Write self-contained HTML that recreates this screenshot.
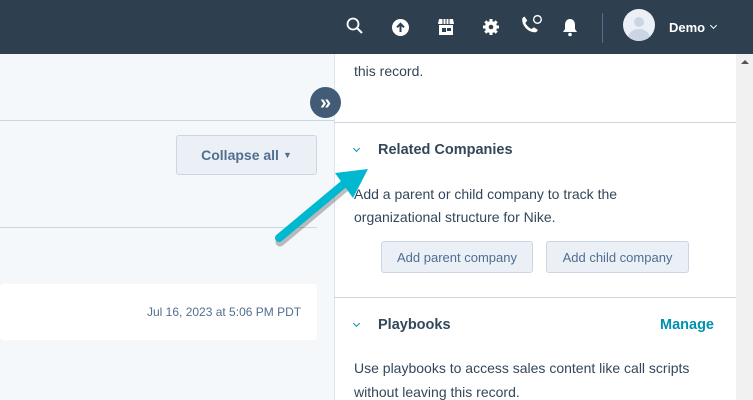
<!DOCTYPE html>
<html><head><meta charset="utf-8">
<style>
*{margin:0;padding:0;box-sizing:border-box}
body{width:753px;height:400px;overflow:hidden;position:relative;font-family:"Liberation Sans",sans-serif;background:#f5f8fa;color:#33475b}
.nav{position:absolute;left:0;top:0;width:753px;height:54px;background:#2e3f50}
.ic{position:absolute;top:15px}
.left{position:absolute;left:0;top:54px;width:334px;height:346px;background:#f5f8fa}
.hl{position:absolute;height:1px;background:#cbd6e2}
.btn{position:absolute;background:#eaf0f6;border:1px solid #cbd6e2;border-radius:3px;color:#506e91;font-size:13px;display:flex;align-items:center;justify-content:center}
.panel{position:absolute;left:334px;top:54px;width:402px;height:346px;background:#fff;border-left:1px solid #dfe3eb}
.sb{position:absolute;left:736px;top:54px;width:17px;height:346px;background:#f1f1f1}
.t{position:absolute;font-size:14px;color:#33475b;white-space:nowrap}
.h{position:absolute;font-size:14.5px;font-weight:bold;color:#33475b}
.chev{position:absolute;width:5px;height:5px;border-right:1.6px solid #0091ae;border-bottom:1.6px solid #0091ae;transform:rotate(45deg)}
</style></head><body>
<div class="nav">
 <svg class="ic" style="left:346px;top:17px" width="18" height="18" viewBox="0 0 18 18"><circle cx="7" cy="7" r="5.5" fill="none" stroke="#fff" stroke-width="1.8"/><path d="M11 11l5 5" stroke="#fff" stroke-width="2"/></svg>
 <svg class="ic" style="left:392px;top:19px" width="17" height="17" viewBox="0 0 17 17"><circle cx="8.5" cy="8.5" r="8.5" fill="#fff"/><path d="M8.5 13V5M5 8.3l3.5-3.5 3.5 3.5" stroke="#2e3f50" stroke-width="2" fill="none"/></svg>
 <svg class="ic" style="left:437px;top:18px" width="18" height="18" viewBox="0 0 18 18"><path d="M2 1h14l1 5H1z" fill="#fff"/><path d="M2 7h14v10H2z" fill="#fff"/><rect x="5" y="10" width="4" height="4" fill="#2e3f50"/><rect x="10" y="10" width="4" height="3" fill="#2e3f50"/><path d="M6 1v5M9 1v5M12 1v5" stroke="#2e3f50" stroke-width="1"/></svg>
 <svg class="ic" style="left:482px;top:18px" width="18" height="18" viewBox="0 0 18 18"><circle cx="9" cy="9" r="6" fill="#fff"/><path d="M9 1v16M1 9h16M3.3 3.3l11.4 11.4M14.7 3.3L3.3 14.7" stroke="#fff" stroke-width="3"/><circle cx="9" cy="9" r="2.3" fill="#2e3f50"/></svg>
 <svg class="ic" style="left:520px;top:14px" width="24" height="24" viewBox="0 0 22 22"><path d="M2 5c0-1.3 1-2.5 2.3-2.5l2.3 3.5-1.7 2.2c1.2 2.3 3.3 4.4 5.6 5.6l2.2-1.7 3.5 2.3c0 1.3-1.2 2.3-2.5 2.3C7.5 16.7 2 11 2 5z" fill="#fff"/><circle cx="16" cy="5" r="3.5" fill="none" stroke="#fff" stroke-width="1.3"/></svg>
 <svg class="ic" style="left:562px;top:18px" width="16" height="19" viewBox="0 0 16 19"><path d="M8 1c3.5 0 5 3 5 6v4l2 3H1l2-3V7c0-3 1.5-6 5-6z" fill="#fff"/><circle cx="8" cy="16.5" r="1.8" fill="#fff"/></svg>
 <div style="position:absolute;left:602px;top:13px;width:1px;height:30px;background:#516f90"></div>
 <div style="position:absolute;left:623px;top:9px;width:32px;height:32px;border-radius:50%;background:#eaf0f6;overflow:hidden">
  <div style="position:absolute;left:11px;top:8px;width:10px;height:10px;border-radius:50%;background:#cbd6e2"></div>
  <div style="position:absolute;left:5px;top:20px;width:22px;height:18px;border-radius:50%;background:#cbd6e2"></div>
 </div>
 <div style="position:absolute;left:669px;top:20px;color:#fff;font-weight:bold;font-size:13px">Demo</div>
 <div style="position:absolute;left:711px;top:23px;width:5px;height:5px;border-right:1px solid #fff;border-bottom:1px solid #fff;transform:rotate(45deg)"></div>
</div>
<div class="left"></div>
<div class="hl" style="left:0;top:120px;width:334px"></div>
<div class="hl" style="left:0;top:227px;width:317px"></div>
<div class="btn" style="left:176px;top:135px;width:141px;height:40px;font-size:14px;font-weight:bold;color:#516f90">Collapse all <span style="font-size:9px;margin-left:4px">▼</span></div>
<div style="position:absolute;left:0;top:284px;width:317px;height:56px;background:#fff;border-radius:4px"></div>
<div class="t" style="left:147px;top:305px;font-size:12px;color:#516f90">Jul 16, 2023 at 5:06 PM PDT</div>
<div class="panel"></div>
<div class="sb"><div style="position:absolute;left:5px;top:6px;width:0;height:0;border-left:4px solid transparent;border-right:4px solid transparent;border-bottom:4px solid #555"></div></div>
<div class="t" style="left:354px;top:63px">this record.</div>
<div class="hl" style="left:334px;top:122px;width:402px"></div>
<div class="chev" style="left:354px;top:146px"></div>
<div class="h" style="left:378px;top:142px">Related Companies</div>
<div class="t" style="left:354px;top:186px">Add a parent or child company to track the</div>
<div class="t" style="left:354px;top:209px">organizational structure for Nike.</div>
<div class="btn" style="left:381px;top:241px;width:152px;height:32px">Add parent company</div>
<div class="btn" style="left:546px;top:241px;width:143px;height:32px">Add child company</div>
<div class="hl" style="left:334px;top:297px;width:402px"></div>
<div class="chev" style="left:354px;top:321px"></div>
<div class="h" style="left:378px;top:317px">Playbooks</div>
<div class="h" style="left:660px;top:317px;color:#0091ae">Manage</div>
<div class="t" style="left:354px;top:360px">Use playbooks to access sales content like call scripts</div>
<div class="t" style="left:354px;top:384px">without leaving this record.</div>
<div style="position:absolute;left:310px;top:87px;width:31px;height:31px;border-radius:50%;background:#425b76;color:#fff;font-size:20px;font-weight:bold;display:flex;align-items:center;justify-content:center;line-height:1">»</div>
<svg style="position:absolute;left:0;top:0" width="753" height="400"><path d="M279 240L347 183" stroke="rgba(0,0,0,0.25)" stroke-width="9" stroke-linecap="round" transform="translate(1,2)"/><path d="M279 238L345 183" stroke="#00b8d0" stroke-width="8" stroke-linecap="round"/><path d="M368 169L335 173L353 198Z" fill="#00b8d0"/></svg>
</body></html>
